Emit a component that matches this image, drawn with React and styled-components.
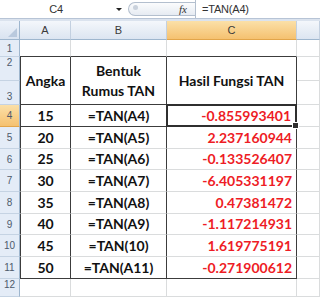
import React from "react";
import styled, { createGlobalStyle } from "styled-components";

const GlobalStyle = createGlobalStyle`
  html, body {
    margin: 0;
    padding: 0;
    background: #ffffff;
  }
  body {
    width: 320px;
    height: 297px;
    overflow: hidden;
    font-family: "Liberation Sans", Arial, sans-serif;
  }
`;

const FormulaBar = styled.div`
  display: flex;
  align-items: center;
  height: 18px;
  background: #ffffff;
  border-bottom: 1px solid #b7c4d6;
  font-size: 11px;
  color: #333;
`;

const NameBox = styled.div`
  width: 112px;
  text-align: center;
  letter-spacing: -0.3px;
`;

const Drop = styled.div`
  width: 0;
  height: 0;
  margin-left: 4px;
  border-left: 3px solid transparent;
  border-right: 3px solid transparent;
  border-top: 3px solid #222;
`;

const Pill = styled.div`
  display: flex;
  align-items: center;
  justify-content: space-between;
  margin-left: 6px;
  width: 67px;
  height: 14px;
  box-sizing: border-box;
  padding: 0 4px 0 4px;
  border: 1px solid #b3bfce;
  border-right: none;
  border-radius: 8px 0 0 8px;
  background: linear-gradient(#fbfcfd, #e6ebf2);
`;

const Knob = styled.span`
  width: 5px;
  height: 5px;
  border-radius: 50%;
  background: #c9d1dc;
  margin-top: -3px;
`;

const Fx = styled.span`
  font-family: "Liberation Serif", serif;
  font-style: italic;
  font-size: 11px;
  color: #333;
  margin-right: 4px;
`;

const FormulaText = styled.div`
  flex: 1;
  height: 18px;
  line-height: 18px;
  border-left: 1px solid #b3bfce;
  padding-left: 6px;
  letter-spacing: -0.2px;
`;

const Gap = styled.div`
  height: 2px;
  background: #dbe3ee;
`;

const Sheet = styled.div`
  display: grid;
  grid-template-columns: 20px 51px 96px 130px 23px;
  grid-template-rows: 19px 17px 24px 24px 22px 22px 21px 22px 22px 21px 22px 22px 18px;
`;

const Corner = styled.div`
  position: relative;
  background: linear-gradient(#eef3fa, #d9e3f0);
  border-right: 1px solid #9eb6ce;
  border-bottom: 1px solid #9eb6ce;
  &::after {
    content: "";
    position: absolute;
    right: 2px;
    bottom: 2px;
    border-left: 9px solid transparent;
    border-bottom: 9px solid #b9c9dd;
  }
`;

const ColHead = styled.div`
  display: flex;
  align-items: center;
  justify-content: center;
  font-size: 11px;
  color: #3a3a3a;
  background: ${(p) =>
    p.$active
      ? "linear-gradient(#fbe0a8, #f5c170)"
      : "linear-gradient(#f4f7fb, #dce5f1)"};
  border-right: 1px solid #c3d0e0;
  border-bottom: 1px solid ${(p) => (p.$active ? "#e2a54a" : "#9eb6ce")};
`;

const RowHead = styled.div`
  display: flex;
  align-items: ${(p) => p.$align || "center"};
  justify-content: center;
  font-size: 10px;
  color: #4e5a6b;
  padding-bottom: ${(p) => (p.$align === "flex-end" ? "2px" : "0")};
  box-sizing: border-box;
  background: ${(p) =>
    p.$active ? "linear-gradient(#fbe0a8, #f5c170)" : "#e4ecf7"};
  border-right: 1px solid #9eb6ce;
  border-bottom: 1px solid ${(p) => (p.$active ? "#e2a54a" : "#c5d3e3")};
`;

const Cell = styled.div`
  display: flex;
  flex-direction: column;
  align-items: ${(p) => p.$justify || "center"};
  justify-content: center;
  box-sizing: border-box;
  padding: 0 4px;
  font-family: Lato, "Open Sans", sans-serif;
  font-weight: 700;
  font-size: 14px;
  line-height: 20px;
  color: ${(p) => (p.$red ? "#ee1c25" : "#111")};
  grid-row: ${(p) => p.$span || "auto"};
  border-right: 1px solid ${(p) => (p.$edge ? "#3c3c3c" : "#dadcdd")};
  border-bottom: 1px solid ${(p) => (p.$under ? "#3c3c3c" : "#dadcdd")};
  ${(p) => (p.$top ? "border-top: 1px solid #3c3c3c; margin-top: -1px;" : "")}
  ${(p) => (p.$left ? "border-left: 1px solid #3c3c3c;" : "")}
`;

const Selected = styled(Cell)`
  position: relative;
  border: 2px solid #2f2f2f;
  margin: -1px 0 0 -1px;
  &::after {
    content: "";
    position: absolute;
    right: -4px;
    bottom: -4px;
    width: 5px;
    height: 5px;
    background: #2f2f2f;
    border: 1px solid #fff;
  }
`;

const rows = [
  [5, 20, "=TAN(A5)", "2.237160944"],
  [6, 25, "=TAN(A6)", "-0.133526407"],
  [7, 30, "=TAN(A7)", "-6.405331197"],
  [8, 35, "=TAN(A8)", "0.47381472"],
  [9, 40, "=TAN(A9)", "-1.117214931"],
  [10, 45, "=TAN(10)", "1.619775191"],
  [11, 50, "=TAN(A11)", "-0.271900612"],
];

export default function App() {
  return (
    <>
      <GlobalStyle />
      <FormulaBar>
        <NameBox>C4</NameBox>
        <Drop />
        <Pill>
          <Knob />
          <Fx>fx</Fx>
        </Pill>
        <FormulaText>=TAN(A4)</FormulaText>
      </FormulaBar>
      <Gap />
      <Sheet>
        <Corner />
        <ColHead>A</ColHead>
        <ColHead>B</ColHead>
        <ColHead $active>C</ColHead>
        <ColHead />

        <RowHead>1</RowHead>
        <Cell $under />
        <Cell $under />
        <Cell $under />
        <Cell />

        <RowHead $align="flex-start">2</RowHead>
        <Cell $span="span 2" $edge $under $left>Angka</Cell>
        <Cell $span="span 2" $edge $under>
          <span>Bentuk</span>
          <span>Rumus TAN</span>
        </Cell>
        <Cell $span="span 2" $edge $under>Hasil Fungsi TAN</Cell>
        <Cell />
        <RowHead $align="flex-end">3</RowHead>
        <Cell />

        <RowHead $active>4</RowHead>
        <Cell $edge $under $left>15</Cell>
        <Cell $edge $under>=TAN(A4)</Cell>
        <Selected $justify="flex-end" $red>-0.855993401</Selected>
        <Cell />

        {rows.map(([n, a, f, v], i) => (
          <React.Fragment key={n}>
            <RowHead>{n}</RowHead>
            <Cell $edge $left $under={i === rows.length - 1}>{a}</Cell>
            <Cell $edge $under={i === rows.length - 1}>{f}</Cell>
            <Cell $edge $under={i === rows.length - 1} $justify="flex-end" $red>
              {v}
            </Cell>
            <Cell />
          </React.Fragment>
        ))}

        <RowHead $align="flex-start">12</RowHead>
        <Cell />
        <Cell />
        <Cell />
        <Cell />
      </Sheet>
    </>
  );
}
